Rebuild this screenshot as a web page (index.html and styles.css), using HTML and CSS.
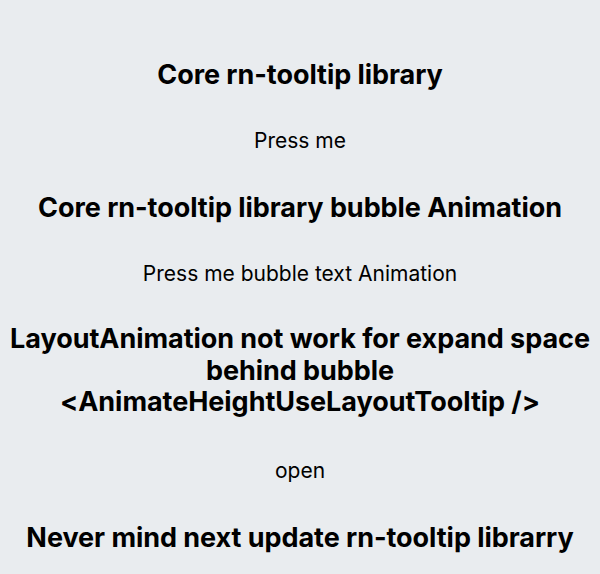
FILE: index.html
```html
<!DOCTYPE html>
<html>
<head>
<meta charset="utf-8">
<link rel="stylesheet" href="styles.css">
</head>
<body>
<main class="screen">
  <h1 class="title">Core rn-tooltip library</h1>
  <p class="action">Press me</p>
  <h1 class="title">Core rn-tooltip library bubble Animation</h1>
  <p class="action">Press me bubble text Animation</p>
  <h1 class="title title-multi">LayoutAnimation not work for expand space behind bubble &lt;AnimateHeightUseLayoutTooltip /&gt;</h1>
  <p class="action">open</p>
  <h1 class="title">Never mind next update rn-tooltip librarry</h1>
</main>
</body>
</html>
```

FILE: styles.css
```css
html, body {
  margin: 0;
  padding: 0;
  background: #e9ecef;
}
body {
  font-family: Inter, "Noto Sans", sans-serif;
  color: #000;
  width: 600px;
  height: 574px;
  overflow: hidden;
}
.screen {
  display: flex;
  flex-direction: column;
  align-items: center;
  gap: 38.5px;
  padding: 59px 6px 0;
  text-align: center;
}
.title {
  margin: 0;
  font-size: 27px;
  line-height: 31.5px;
  font-weight: 700;
  letter-spacing: -0.05px;
}
.title-multi {
  margin-top: -1px;
  margin-bottom: 3px;
}
.action {
  margin: 0;
  font-size: 21px;
  line-height: 24px;
  font-weight: 400;
}
```
